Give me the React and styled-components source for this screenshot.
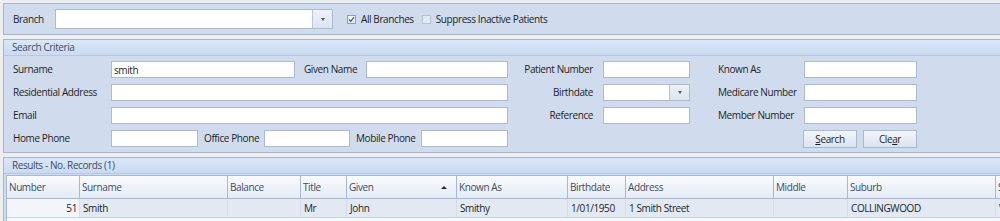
import styled, { createGlobalStyle } from 'styled-components';

const GlobalStyle = createGlobalStyle`
  html, body {
    margin: 0;
    padding: 0;
    background: #EDEEF0;
    overflow: hidden;
  }
  body {
    font-family: "Open Sans", "Noto Sans", sans-serif;
    font-size: 10px;
    letter-spacing: -0.4px;
    color: #1E1E1E;
  }
`;

const columns = [
  { key: 'number', title: 'Number', width: 73, align: 'right' },
  { key: 'surname', title: 'Surname', width: 148 },
  { key: 'balance', title: 'Balance', width: 73 },
  { key: 'title', title: 'Title', width: 46 },
  { key: 'given', title: 'Given', width: 110, sorted: true },
  { key: 'knownAs', title: 'Known As', width: 111 },
  { key: 'birthdate', title: 'Birthdate', width: 58 },
  { key: 'address', title: 'Address', width: 148 },
  { key: 'middle', title: 'Middle', width: 74 },
  { key: 'suburb', title: 'Suburb', width: 148 },
  { key: 'state', title: 'State', width: 60 },
];

const rows = [
  {
    number: '51',
    surname: 'Smith',
    balance: '',
    title: 'Mr',
    given: 'John',
    knownAs: 'Smithy',
    birthdate: '1/01/1950',
    address: '1 Smith Street',
    middle: '',
    suburb: 'COLLINGWOOD',
    state: 'VIC',
  },
];

export default function App() {
  return (
    <>
      <GlobalStyle />
      <Page>
        <TopBar>
          <Label $width={42}>Branch</Label>
          <Combo $width={278} $height={20}>
            <ComboButton>
              <Arrow />
            </ComboButton>
          </Combo>
          <Check $first>
            <Box $checked>
              <svg width="7" height="7" viewBox="0 0 7 7">
                <path d="M1 3.5 L2.8 5.3 L6 1.2" fill="none" stroke="#4A566A" strokeWidth="1.2" />
              </svg>
            </Box>
            All Branches
          </Check>
          <Check>
            <Box />
            Suppress Inactive Patients
          </Check>
        </TopBar>

        <Panel>
          <PanelHeader>Search Criteria</PanelHeader>
          <Criteria>
            <Row>
              <Label $width={98}>Surname</Label>
              <Input $width={184} defaultValue="smith" />
              <Label $width={62} $gap={9}>Given Name</Label>
              <Input $width={142} />
              <Label $width={95} $right>Patient Number</Label>
              <Input $width={87} />
              <Label $width={86} $gap={28}>Known As</Label>
              <Input $width={113} />
            </Row>
            <Row>
              <Label $width={98}>Residential Address</Label>
              <Input $width={397} />
              <Label $width={95} $right>Birthdate</Label>
              <Combo $width={87} $height={17}>
                <ComboButton>
                  <Arrow />
                </ComboButton>
              </Combo>
              <Label $width={86} $gap={28}>Medicare Number</Label>
              <Input $width={113} />
            </Row>
            <Row>
              <Label $width={98}>Email</Label>
              <Input $width={397} />
              <Label $width={95} $right>Reference</Label>
              <Input $width={87} />
              <Label $width={86} $gap={28}>Member Number</Label>
              <Input $width={113} />
            </Row>
            <Row>
              <Label $width={98}>Home Phone</Label>
              <Input $width={87} />
              <Label $width={60} $gap={6}>Office Phone</Label>
              <Input $width={86} />
              <Label $width={65} $gap={6}>Mobile Phone</Label>
              <Input $width={87} />
              <Buttons>
                <Button><u>S</u>earch</Button>
                <Button>Cle<u>a</u>r</Button>
              </Buttons>
            </Row>
          </Criteria>
        </Panel>

        <Panel>
          <PanelHeader>Results - No. Records (1)</PanelHeader>
          <Grid $cols={columns.map((c) => c.width + 'px').join(' ')}>
            {columns.map((c) => (
              <HeadCell key={c.key}>
                {c.title}
                {c.sorted && <SortArrow />}
              </HeadCell>
            ))}
            {rows.map((r) =>
              columns.map((c, i) => (
                <Cell key={r.number + c.key} $align={c.align} $focused={i === 0}>
                  {r[c.key]}
                </Cell>
              ))
            )}
          </Grid>
        </Panel>
      </Page>
    </>
  );
}

const Page = styled.div`
  width: 1010px;
  height: 221px;
  box-sizing: border-box;
  overflow: hidden;
  padding: 3px 0 0 3px;
  display: flex;
  flex-direction: column;
  gap: 4px;
`;

const Panel = styled.section`
  flex: none;
  background: #D0DCEE;
  border: 1px solid #A7B6CC;
`;

const TopBar = styled(Panel)`
  display: flex;
  align-items: center;
  padding: 5px 0 5px 9px;
`;

const PanelHeader = styled.div`
  height: 15px;
  line-height: 15px;
  padding-left: 8px;
  color: #3E4D66;
  background: linear-gradient(#DBE7F7, #C9DAF1);
  border-bottom: 1px solid #B7C8E0;
`;

const Criteria = styled.div`
  display: flex;
  flex-direction: column;
  gap: 6px;
  padding: 5px 0 4px 9px;
`;

const Row = styled.div`
  display: flex;
  align-items: flex-start;
`;

const Label = styled.label`
  flex: none;
  width: ${(p) => p.$width}px;
  margin-left: ${(p) => p.$gap || 0}px;
  padding-right: ${(p) => (p.$right ? 10 : 0)}px;
  box-sizing: border-box;
  text-align: ${(p) => (p.$right ? 'right' : 'left')};
  line-height: 17px;
  white-space: nowrap;
`;

const Input = styled.input`
  flex: none;
  width: ${(p) => p.$width}px;
  height: 17px;
  box-sizing: border-box;
  margin: 0;
  padding: 0 2px;
  border: 1px solid #ABBBD2;
  background: #FFFFFF;
  font: inherit;
  letter-spacing: inherit;
  color: #1E1E1E;
  outline: none;
`;

const Combo = styled.div`
  flex: none;
  display: flex;
  justify-content: flex-end;
  width: ${(p) => p.$width}px;
  height: ${(p) => p.$height}px;
  box-sizing: border-box;
  border: 1px solid #ABBBD2;
  background: #FFFFFF;
`;

const ComboButton = styled.div`
  width: 19px;
  display: flex;
  align-items: center;
  justify-content: center;
  border-left: 1px solid #B9C7DA;
  background: linear-gradient(#EEF2F8, #DCE4F0);
`;

const Arrow = styled.span`
  width: 0;
  height: 0;
  border-left: 2.5px solid transparent;
  border-right: 2.5px solid transparent;
  border-top: 3px solid #505A6A;
`;

const Check = styled.div`
  display: flex;
  align-items: center;
  gap: 5px;
  margin-left: ${(p) => (p.$first ? 14 : 8)}px;
  white-space: nowrap;
`;

const Box = styled.span`
  width: 9px;
  height: 9px;
  box-sizing: border-box;
  display: flex;
  align-items: center;
  justify-content: center;
  border: 1px solid ${(p) => (p.$checked ? '#8D9FBA' : '#B6C4D8')};
  background: ${(p) => (p.$checked ? 'linear-gradient(#F4F7FB, #DEE6F1)' : '#E3EAF4')};
`;

const Buttons = styled.div`
  display: flex;
  gap: 6px;
  margin-left: 295px;
`;

const Button = styled.button`
  width: 54px;
  height: 18px;
  padding: 0;
  font: inherit;
  letter-spacing: inherit;
  color: #1E1E1E;
  border: 1px solid #A9B9D0;
  background: linear-gradient(#F3F6FB, #DAE3EF);
`;

const Grid = styled.div`
  display: grid;
  grid-template-columns: ${(p) => p.$cols};
  margin: 1px 0 0 2px;
  border-top: 1px solid #A9B8CE;
  border-left: 1px solid #A9B8CE;
  background: #F7F9FC;
  height: 60px;
  align-content: start;
`;

const HeadCell = styled.div`
  position: relative;
  height: 23px;
  line-height: 23px;
  padding-left: 2px;
  box-sizing: border-box;
  color: #3F4C62;
  background: linear-gradient(#FAFBFD, #E3EBF6);
  border-right: 1px solid #A9B8CE;
  border-bottom: 1px solid #A9B8CE;
  white-space: nowrap;
  overflow: hidden;
`;

const SortArrow = styled.span`
  position: absolute;
  right: 9px;
  top: 10px;
  width: 0;
  height: 0;
  border-left: 3px solid transparent;
  border-right: 3px solid transparent;
  border-bottom: 3px solid #2A2A2A;
`;

const Cell = styled.div`
  height: 19px;
  line-height: 18px;
  box-sizing: border-box;
  padding: 0 ${(p) => (p.$align === 'right' ? 2 : 0)}px 0 3px;
  text-align: ${(p) => p.$align || 'left'};
  background: ${(p) => (p.$focused ? '#F2F5FA' : '#E2E9F3')};
  border-right: 1px solid #D2DCEA;
  border-bottom: 1px solid #C3D2E8;
  white-space: nowrap;
  overflow: hidden;
`;
